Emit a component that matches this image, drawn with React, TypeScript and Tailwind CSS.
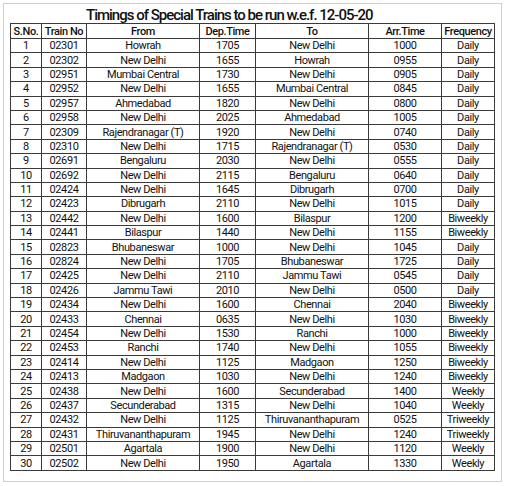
import React from "react";

type Row = [string, string, string, string, string, string, string];

const rows: Row[] = [
  ["1", "02301", "Howrah", "1705", "New Delhi", "1000", "Daily"],
  ["2", "02302", "New Delhi", "1655", "Howrah", "0955", "Daily"],
  ["3", "02951", "Mumbai Central", "1730", "New Delhi", "0905", "Daily"],
  ["4", "02952", "New Delhi", "1655", "Mumbai Central", "0845", "Daily"],
  ["5", "02957", "Ahmedabad", "1820", "New Delhi", "0800", "Daily"],
  ["6", "02958", "New Delhi", "2025", "Ahmedabad", "1005", "Daily"],
  ["7", "02309", "Rajendranagar (T)", "1920", "New Delhi", "0740", "Daily"],
  ["8", "02310", "New Delhi", "1715", "Rajendranagar (T)", "0530", "Daily"],
  ["9", "02691", "Bengaluru", "2030", "New Delhi", "0555", "Daily"],
  ["10", "02692", "New Delhi", "2115", "Bengaluru", "0640", "Daily"],
  ["11", "02424", "New Delhi", "1645", "Dibrugarh", "0700", "Daily"],
  ["12", "02423", "Dibrugarh", "2110", "New Delhi", "1015", "Daily"],
  ["13", "02442", "New Delhi", "1600", "Bilaspur", "1200", "Biweekly"],
  ["14", "02441", "Bilaspur", "1440", "New Delhi", "1155", "Biweekly"],
  ["15", "02823", "Bhubaneswar", "1000", "New Delhi", "1045", "Daily"],
  ["16", "02824", "New Delhi", "1705", "Bhubaneswar", "1725", "Daily"],
  ["17", "02425", "New Delhi", "2110", "Jammu Tawi", "0545", "Daily"],
  ["18", "02426", "Jammu Tawi", "2010", "New Delhi", "0500", "Daily"],
  ["19", "02434", "New Delhi", "1600", "Chennai", "2040", "Biweekly"],
  ["20", "02433", "Chennai", "0635", "New Delhi", "1030", "Biweekly"],
  ["21", "02454", "New Delhi", "1530", "Ranchi", "1000", "Biweekly"],
  ["22", "02453", "Ranchi", "1740", "New Delhi", "1055", "Biweekly"],
  ["23", "02414", "New Delhi", "1125", "Madgaon", "1250", "Biweekly"],
  ["24", "02413", "Madgaon", "1030", "New Delhi", "1240", "Biweekly"],
  ["25", "02438", "New Delhi", "1600", "Secunderabad", "1400", "Weekly"],
  ["26", "02437", "Secunderabad", "1315", "New Delhi", "1040", "Weekly"],
  ["27", "02432", "New Delhi", "1125", "Thiruvananthapuram", "0525", "Triweekly"],
  ["28", "02431", "Thiruvananthapuram", "1945", "New Delhi", "1240", "Triweekly"],
  ["29", "02501", "Agartala", "1900", "New Delhi", "1120", "Weekly"],
  ["30", "02502", "New Delhi", "1950", "Agartala", "1330", "Weekly"],
];

const headers = ["S.No.", "Train No", "From", "Dep.Time", "To", "Arr.Time", "Frequency"];
const widths = ["w-[31px]", "w-[45px]", "w-[113px]", "w-[56px]", "w-[113px]", "w-[73px]", "w-[53px]"];

export default function App() {
  return (
    <div className="w-[505px] h-[486px] bg-white p-[3px] font-['Roboto',sans-serif] text-[#111]">
      <div className="w-full h-[479px] border border-[#cfcfcf] pt-[3px] pl-[6px]">
        <h1 className="pl-[76px] text-[15px] leading-[16px] font-medium tracking-[-1px] h-[16px]">
          Timings of Special Trains to be run w.e.f. 12-05-20
        </h1>
        <table className="border-collapse table-fixed w-[484px] text-[11px] leading-[13px] tracking-[-0.4px]">
          <thead>
            <tr className="h-[15px]">
              {headers.map((h, i) => (
                <th key={h} className={`${widths[i]} border border-[#3a3a3a] font-medium text-center p-0`}>
                  {h}
                </th>
              ))}
            </tr>
          </thead>
          <tbody>
            {rows.map((r) => (
              <tr key={r[0]} className="h-[14.4px]">
                {r.map((c, i) => (
                  <td key={i} className="border border-[#3a3a3a] text-center p-0 whitespace-nowrap">
                    {c}
                  </td>
                ))}
              </tr>
            ))}
          </tbody>
        </table>
      </div>
    </div>
  );
}
